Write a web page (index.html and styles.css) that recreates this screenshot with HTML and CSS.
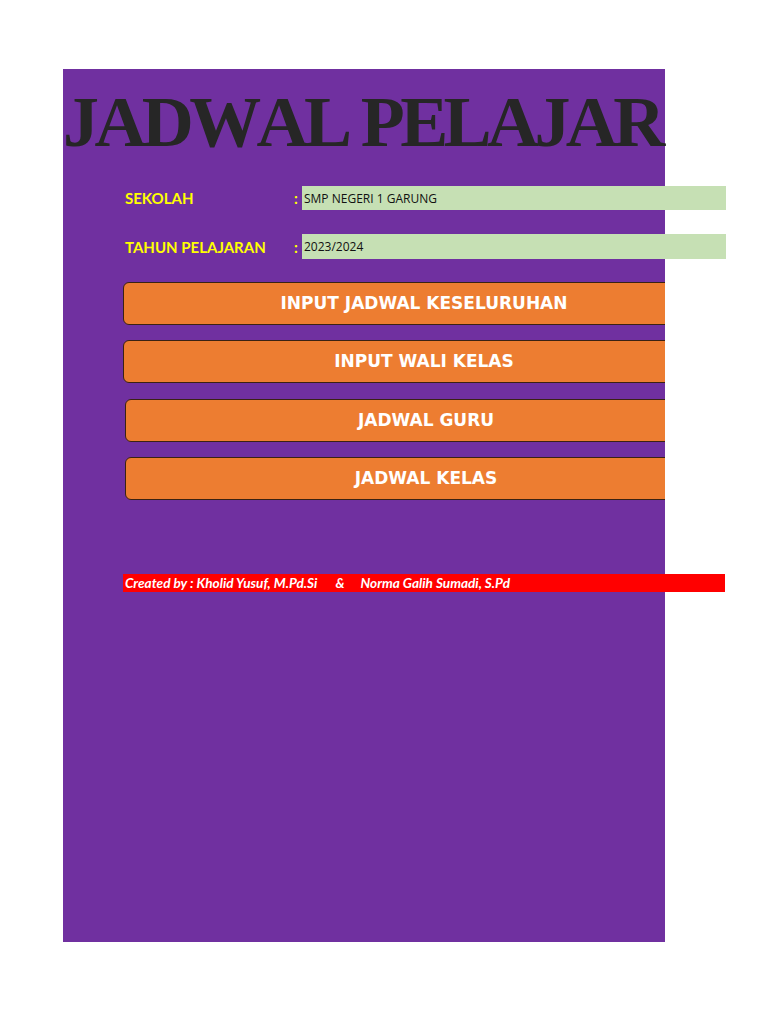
FILE: index.html
```html
<!DOCTYPE html>
<html lang="id">
<head>
<meta charset="utf-8">
<title>Jadwal Pelajaran</title>
<link rel="stylesheet" href="styles.css">
</head>
<body>
<div class="page">
  <div class="sheet">
    <div class="title-wrap">
      <h1 class="title">JADWAL PELAJAR</h1>
    </div>
    <div class="info">
      <div class="row">
        <span class="label">SEKOLAH</span>
        <span class="colon">:</span>
        <span class="field">SMP NEGERI 1 GARUNG</span>
      </div>
      <div class="row row-2">
        <span class="label">TAHUN PELAJARAN</span>
        <span class="colon">:</span>
        <span class="field field-tall">2023/2024</span>
      </div>
    </div>
    <div class="buttons">
      <div class="btn btn-1">INPUT JADWAL KESELURUHAN</div>
      <div class="btn btn-2">INPUT WALI KELAS</div>
      <div class="btn btn-3">JADWAL GURU</div>
      <div class="btn btn-4">JADWAL KELAS</div>
    </div>
    <div class="credit">
      <span>Created by : Kholid Yusuf, M.Pd.Si</span>
      <span class="amp">&amp;</span>
      <span>Norma Galih Sumadi, S.Pd</span>
    </div>
  </div>
</div>
</body>
</html>
```

FILE: styles.css
```css
html, body {
  margin: 0;
  padding: 0;
  background: #ffffff;
}

.page {
  padding: 69px 0 0 63px;
}

.sheet {
  width: 602px;
  height: 873px;
  background: #7030A0;
  display: flex;
  flex-direction: column;
}

.title-wrap {
  width: 602px;
  padding-top: 13px;
}

.title {
  margin: 0;
  font-family: "Liberation Serif", "Times New Roman", serif;
  font-weight: bold;
  font-size: 72px;
  line-height: 80px;
  letter-spacing: -4.6px;
  font-kerning: none;
  color: #262626;
  white-space: nowrap;
}

.info {
  margin-top: 24px;
  margin-left: 62px;
  display: flex;
  flex-direction: column;
  gap: 24px;
}

.row {
  display: flex;
  align-items: center;
  height: 24px;
}

.row-2 {
  height: 25px;
}

.label {
  width: 169px;
  flex-shrink: 0;
  white-space: nowrap;
  font-family: Lato, "Liberation Sans", sans-serif;
  font-weight: bold;
  font-size: 15px;
  color: #FFFF00;
}

.colon {
  width: 8px;
  flex-shrink: 0;
  font-family: Lato, "Liberation Sans", sans-serif;
  font-weight: bold;
  font-size: 15px;
  color: #FFFF00;
}

.field {
  width: 422px;
  height: 24px;
  padding-left: 2px;
  background: #C6E0B4;
  display: flex;
  align-items: center;
  font-family: "Open Sans", "Liberation Sans", sans-serif;
  font-size: 12px;
  color: #111111;
  flex-shrink: 0;
  white-space: nowrap;
}

.field-tall {
  height: 25px;
}

.buttons {
  overflow: hidden;
  width: 602px;
  margin-top: 23px;
  display: flex;
  flex-direction: column;
}

.btn {
  width: 600px;
  height: 40px;
  margin-left: 60px;
  box-sizing: content-box;
  background: #ED7D31;
  border: 1px solid #3a2213;
  border-radius: 6px;
  color: #ffffff;
  font-family: "DejaVu Sans", Verdana, sans-serif;
  font-weight: bold;
  font-size: 17px;
  display: flex;
  align-items: center;
  justify-content: center;
  padding-bottom: 1px;
  line-height: 1;
  flex-shrink: 0;
}

.btn-2 {
  margin-top: 15px;
}

.btn-3 {
  margin-top: 16px;
  margin-left: 62px;
}

.btn-4 {
  margin-top: 15px;
  margin-left: 62px;
}

.credit {
  margin-top: 74px;
  margin-left: 60px;
  width: 600px;
  height: 18px;
  padding-left: 2px;
  background: #FF0000;
  display: flex;
  align-items: center;
  font-family: Lato, "Liberation Sans", sans-serif;
  font-weight: bold;
  font-style: italic;
  font-size: 13.6px;
  color: #ffffff;
  white-space: pre;
  flex-shrink: 0;
}

.amp {
  margin: 0 16px 0 18px;
}
```
